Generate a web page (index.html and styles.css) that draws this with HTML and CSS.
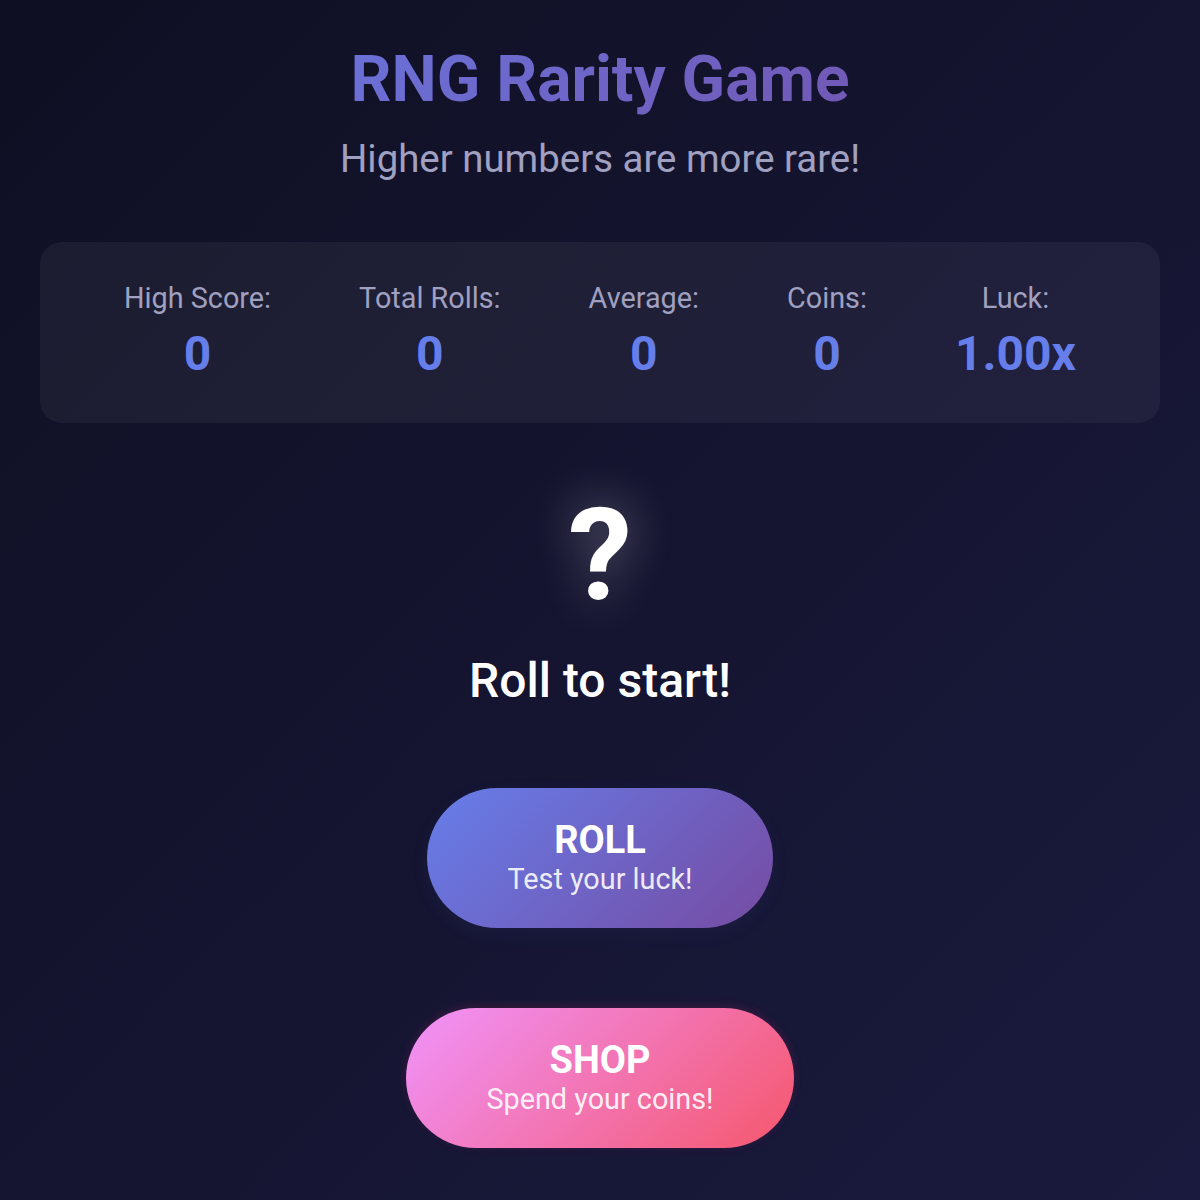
FILE: index.html
```html
<!DOCTYPE html>
<html lang="en">
<head>
    <meta charset="UTF-8">
    <meta name="viewport" content="width=device-width, initial-scale=1.0">
    <title>RNG Rarity Game</title>
    <link rel="stylesheet" href="styles.css">
</head>
<body>
    <div class="container">
        <header class="header">
            <h1 class="title">RNG Rarity Game</h1>
            <p class="subtitle">Higher numbers are more rare!</p>
        </header>

        <div class="stats">
            <div class="stat">
                <span class="stat-label">High Score:</span>
                <span class="stat-value" id="highScore">0</span>
            </div>
            <div class="stat">
                <span class="stat-label">Total Rolls:</span>
                <span class="stat-value" id="totalRolls">0</span>
            </div>
            <div class="stat">
                <span class="stat-label">Average:</span>
                <span class="stat-value" id="average">0</span>
            </div>
            <div class="stat">
                <span class="stat-label">Coins:</span>
                <span class="stat-value" id="coins">0</span>
            </div>
            <div class="stat">
                <span class="stat-label">Luck:</span>
                <span class="stat-value" id="luck">1.00x</span>
            </div>
        </div>

        <div class="result">
            <div class="result-number" id="resultNumber">?</div>
            <div class="result-text" id="resultText">Roll to start!</div>
        </div>

        <div class="actions">
            <button class="btn btn-roll">
                <span class="btn-title">ROLL</span>
                <span class="btn-sub">Test your luck!</span>
            </button>
            <button class="btn btn-shop">
                <span class="btn-title">SHOP</span>
                <span class="btn-sub">Spend your coins!</span>
            </button>
        </div>
    </div>
</body>
</html>
```

FILE: styles.css
```css
* {
    box-sizing: border-box;
}

body {
    font-family: Roboto, "Liberation Sans", sans-serif;
    background: linear-gradient(135deg, #0f0f23 0%, #1a1a3e 100%);
    color: #fff;
    margin: 0;
    padding: 0;
    min-height: 100vh;
}

.container {
    max-width: 1200px;
    margin: 0 auto;
    padding: 42px 40px;
}

.header {
    text-align: center;
}

.title {
    font-size: 64px;
    font-weight: 700;
    margin: 0;
    line-height: 1.2;
    background: linear-gradient(135deg, #667eea 0%, #764ba2 100%);
    -webkit-background-clip: text;
    background-clip: text;
    color: transparent;
}

.subtitle {
    font-size: 38.4px;
    color: #a0a0c0;
    margin: 15px 0 0;
    line-height: 1.3;
}

.stats {
    display: flex;
    justify-content: space-around;
    margin-top: 58px;
    padding: 39px 40px 41px;
    background: rgba(255, 255, 255, 0.05);
    border-radius: 22px;
}

.stat {
    display: flex;
    flex-direction: column;
    align-items: center;
}

.stat-label {
    font-size: 28.8px;
    color: #a0a0c0;
}

.stat-value {
    font-size: 48px;
    font-weight: 700;
    color: #667eea;
    margin-top: 10px;
}

.result {
    text-align: center;
    margin-top: 62px;
}

.result-number {
    font-size: 128px;
    font-weight: 700;
    line-height: 1.1;
    text-shadow: 0 0 50px rgba(255, 255, 255, 0.4);
}

.result-text {
    font-size: 48px;
    font-weight: 500;
    margin-top: 26px;
}

.actions {
    display: flex;
    flex-direction: column;
    align-items: center;
    gap: 80px;
    margin-top: 79px;
}

.btn {
    display: flex;
    flex-direction: column;
    align-items: center;
    justify-content: center;
    height: 140px;
    padding: 0 80px;
    border: none;
    border-radius: 70px;
    color: #fff;
    font-family: inherit;
    cursor: pointer;
}

.btn-roll {
    background: linear-gradient(135deg, #667eea 0%, #764ba2 100%);
    box-shadow: 0 6px 20px rgba(102, 126, 234, 0.06);
}

.btn-shop {
    background: linear-gradient(135deg, #f093fb 0%, #f5576c 100%);
    box-shadow: 0 -2px 10px rgba(200, 40, 110, 0.2);
}

.btn-title {
    font-size: 38px;
    font-weight: 700;
    line-height: 1.15;
}

.btn-sub {
    font-size: 28.8px;
    color: rgba(255, 255, 255, 0.9);
}
```
